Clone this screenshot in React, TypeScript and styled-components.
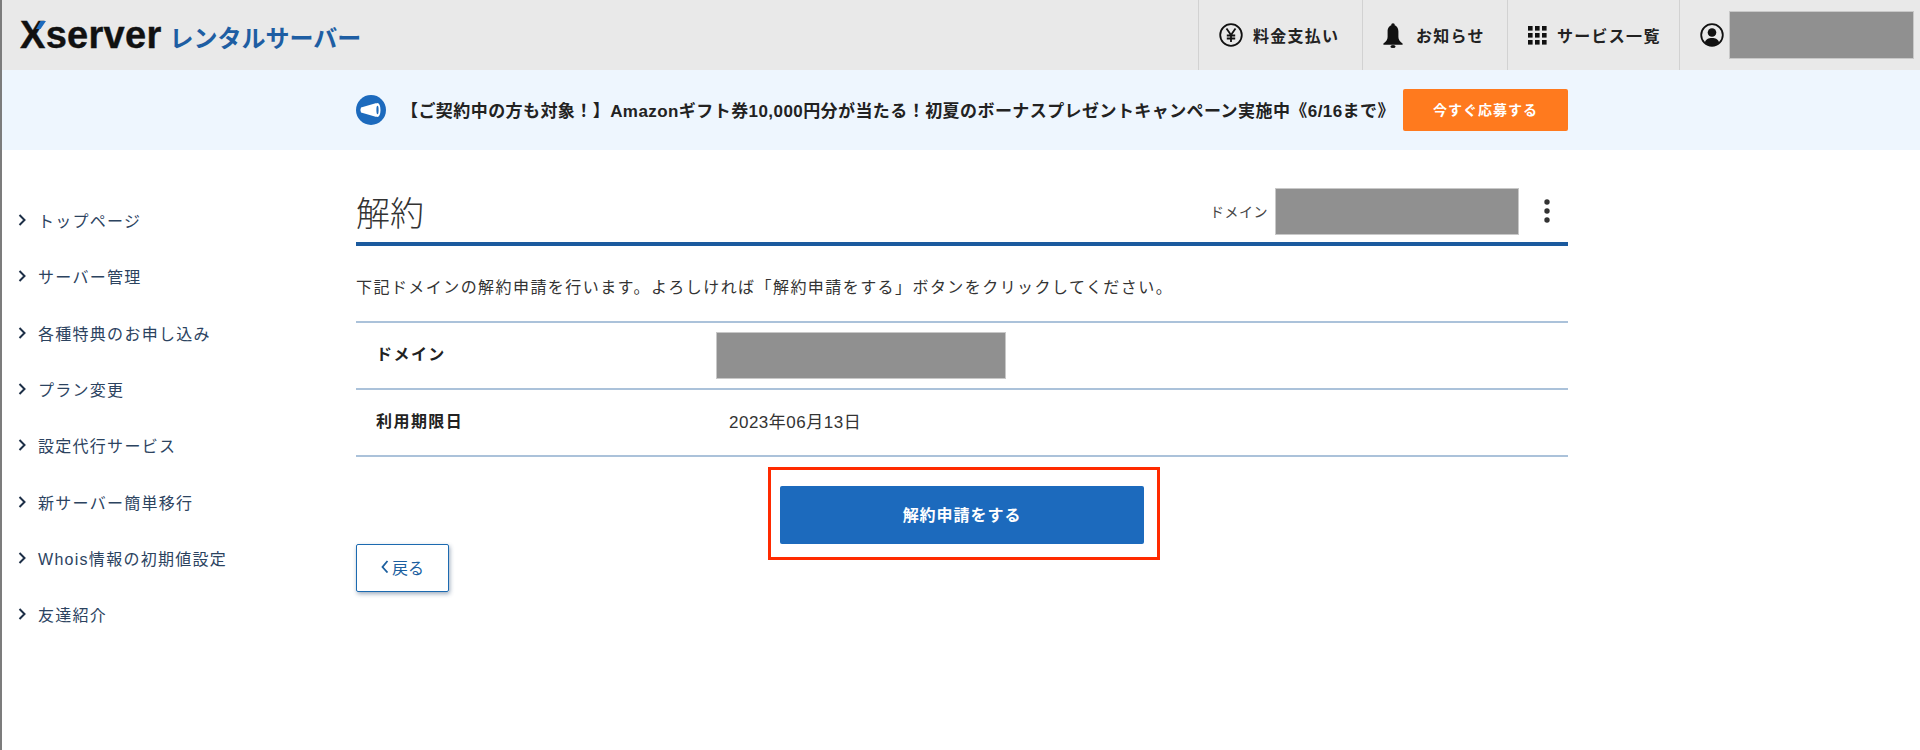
import styled, {createGlobalStyle} from 'styled-components';

const FONT = '"Liberation Sans", "Noto Sans CJK JP", sans-serif';

const NAV_ITEMS = [
  'トップページ',
  'サーバー管理',
  '各種特典のお申し込み',
  'プラン変更',
  '設定代行サービス',
  '新サーバー簡単移行',
  'Whois情報の初期値設定',
  '友達紹介',
];

const GlobalStyle = createGlobalStyle`
  html, body {
    margin: 0;
    padding: 0;
    background: #fff;
  }
  body {
    font-family: ${FONT};
    color: #333;
  }
`;

const Page = styled.div`
  box-sizing: border-box;
  min-height: 750px;
  border-left: 2px solid #7c7c7c;
`;

const Header = styled.header`
  display: flex;
  align-items: stretch;
  height: 70px;
  background: #e9e9e9;
`;

const Logo = styled.div`
  display: flex;
  align-items: center;
  flex: 1;
  padding-left: 18px;
`;

const LogoMark = styled.span`
  position: relative;
  font-size: 38px;
  font-weight: 700;
  letter-spacing: 0.3px;
  color: #111;
  -webkit-text-stroke: 0.4px #111;
`;

const LogoTick = styled.svg`
  position: absolute;
  left: 16px;
  top: 7px;
  width: 10px;
  height: 8px;
`;

const LogoSub = styled.span`
  margin-left: 8px;
  margin-top: 2px;
  font-size: 24px;
  font-weight: 700;
  color: #1e5ea3;
`;

const NavButton = styled.div<{$width: number}>`
  display: flex;
  align-items: center;
  gap: 10px;
  box-sizing: border-box;
  width: ${p => p.$width}px;
  padding-left: 20px;
  border-left: 1px solid #d2d2d2;
  font-size: 16px;
  font-weight: 700;
  letter-spacing: 0.08em;
  color: #222;
`;

const UserBox = styled(NavButton)`
  gap: 5px;
`;

const Redacted = styled.div<{$width: number; $height: number}>`
  flex: none;
  box-sizing: border-box;
  width: ${p => p.$width}px;
  height: ${p => p.$height}px;
  background: #909090;
  border: 1px solid #c8c8c8;
`;

const Banner = styled.div`
  display: flex;
  align-items: center;
  height: 80px;
  padding: 0 352px 0 354px;
  background: #eef6fe;
`;

const BannerText = styled.p`
  margin: 0 0 2px 15px;
  font-size: 17px;
  font-weight: 700;
  letter-spacing: 0.43px;
  color: #222;
  white-space: nowrap;
`;

const ApplyButton = styled.div`
  display: flex;
  align-items: center;
  justify-content: center;
  flex: none;
  width: 165px;
  height: 42px;
  box-sizing: border-box;
  padding-bottom: 2px;
  margin-left: auto;
  border-radius: 2px;
  background: #ff7a1e;
  color: #fff;
  font-size: 14px;
  font-weight: 700;
  letter-spacing: 0.07em;
`;

const Body = styled.div`
  display: flex;
  align-items: flex-start;
`;

const Sidebar = styled.nav`
  flex: none;
  width: 354px;
  padding-top: 42px;
`;

const SideItem = styled.div`
  display: flex;
  align-items: center;
  gap: 12px;
  height: 56.3px;
  padding-left: 16px;
  font-size: 16px;
  letter-spacing: 0.08em;
  color: #2c435f;
  white-space: nowrap;
`;

const Main = styled.main`
  flex: none;
  width: 1212px;
`;

const TitleRow = styled.div`
  display: flex;
  align-items: center;
  height: 96px;
  box-sizing: border-box;
  padding-top: 30px;
  border-bottom: 4px solid #1b5a9e;
`;

const Title = styled.h1`
  flex: 1;
  margin: 0;
  font-size: 34px;
  font-weight: 300;
  color: #333;
`;

const DomainLabel = styled.span`
  margin-right: 7px;
  font-size: 14px;
  letter-spacing: 0.5px;
  color: #444;
`;

const Dots = styled.svg`
  width: 8px;
  height: 26px;
  margin: 0 17px 0 24px;
`;

const Lead = styled.p`
  margin: 0;
  padding: 31px 0 22px;
  font-size: 16px;
  line-height: 22px;
  letter-spacing: 0.09em;
  color: #333;
`;

const InfoTable = styled.div`
  border-top: 2px solid #abc2da;
`;

const InfoRow = styled.div`
  display: flex;
  align-items: center;
  height: 65px;
  padding-left: 20px;
  border-bottom: 2px solid #abc2da;
`;

const InfoLabel = styled.div`
  width: 340px;
  padding-bottom: 6px;
  font-size: 16px;
  font-weight: 700;
  letter-spacing: 0.09em;
  color: #222;
`;

const InfoValue = styled.div`
  display: flex;
  padding: 0 0 5px 13px;
  font-size: 17px;
  letter-spacing: 0.5px;
  color: #333;
`;

const RedactedValue = styled(InfoValue)`
  padding: 0;
`;

const SubmitWrap = styled.div`
  display: flex;
  justify-content: center;
  padding-top: 29px;
`;

const SubmitButton = styled.div`
  position: relative;
  display: flex;
  align-items: center;
  justify-content: center;
  width: 364px;
  height: 58px;
  box-sizing: border-box;
  padding-bottom: 2px;
  border-radius: 2px;
  background: #1c6abd;
  color: #fff;
  font-size: 16px;
  font-weight: 700;
  letter-spacing: 0.06em;
`;

const Highlight = styled.div`
  position: absolute;
  top: -19px;
  right: -16px;
  bottom: -16px;
  left: -12px;
  border: 3px solid #ff2a00;
`;

const BackButton = styled.div`
  display: flex;
  align-items: center;
  justify-content: center;
  gap: 3px;
  box-sizing: border-box;
  width: 93px;
  height: 48px;
  padding-bottom: 3px;
  border: 1px solid #1c6ab0;
  border-radius: 2px;
  box-shadow: 1px 2px 4px rgba(40, 70, 110, 0.45);
  color: #1c5f9f;
  font-size: 16px;
`;

const BellSvg = styled.svg`
  margin-right: 3px;
`;

const YenIcon = () => (
  <svg width="24" height="24" viewBox="0 0 24 24" fill="none" stroke="#111" strokeWidth="1.8">
    <circle cx="12" cy="12" r="10.8" />
    <path d="M7.5 5.5 12 12l4.5-6.5M12 12v7M7.8 12.5h8.4M7.8 15.5h8.4" />
  </svg>
);

const BellIcon = () => (
  <BellSvg width="20" height="25" viewBox="0 0 20 25" fill="#111">
    <circle cx="10" cy="2" r="1.8" />
    <path d="M10 2c-3.6 0-5.4 3-5.4 6.5v5.5c0 2.5-1.4 4.5-4.2 6.4v1.3h19.2v-1.3c-2.8-1.9-4.2-3.9-4.2-6.4V8.5C15.4 5 13.6 2 10 2z" />
    <ellipse cx="10" cy="23.4" rx="2.6" ry="1.5" />
  </BellSvg>
);

const GridIcon = () => (
  <svg width="19" height="19" viewBox="0 0 19 19" fill="#111">
    {[0, 7, 14].map(y =>
      [0, 7, 14].map(x => <rect key={`${x}-${y}`} x={x} y={y} width="4.6" height="4.6" />),
    )}
  </svg>
);

const UserIcon = () => (
  <svg width="24" height="24" viewBox="0 0 24 24" fill="none">
    <circle cx="12" cy="12" r="10.8" stroke="#111" strokeWidth="1.8" />
    <circle cx="12" cy="9.5" r="4.3" fill="#111" />
    <path d="M4.8 19.5c.8-3.200 3.800-4.600 7.200-4.600s6.400 1.400 7.200 4.600A10 10 0 0 1 12 22.400a10 10 0 0 1-7.200-2.900z" fill="#111" />
  </svg>
);

const MegaphoneIcon = () => (
  <svg width="30" height="30" viewBox="0 0 30 30">
    <circle cx="15" cy="15" r="15" fill="#1c6abd" />
    <path d="M5 12.500Q3.800 15 5 17.500L20.500 22V8z" fill="#fff" />
    <ellipse cx="21.500" cy="15" rx="3" ry="7" fill="#fff" />
    <ellipse cx="21.500" cy="15" rx="1.100" ry="4.200" fill="#1c6abd" />
  </svg>
);

const ChevronRight = () => (
  <svg width="8" height="12" viewBox="0 0 8 12" fill="none" stroke="#1d2f47" strokeWidth="2">
    <path d="M1.500 1 6.500 6l-5 5" />
  </svg>
);

const ChevronLeft = () => (
  <svg width="8" height="13" viewBox="0 0 8 13" fill="none" stroke="#1c5f9f" strokeWidth="1.800">
    <path d="M6.500 1 1.500 7l5 5.500" />
  </svg>
);

const App = () => (
  <Page>
    <GlobalStyle />
    <Header>
      <Logo>
        <LogoMark>
          Xserver
          <LogoTick viewBox="0 0 10 8">
            <path d="M0 8h4.500L10 0H4.500z" fill="#1c6abd" />
          </LogoTick>
        </LogoMark>
        <LogoSub>レンタルサーバー</LogoSub>
      </Logo>
      <NavButton $width={164}>
        <YenIcon />
        料金支払い
      </NavButton>
      <NavButton $width={145}>
        <BellIcon />
        お知らせ
      </NavButton>
      <NavButton $width={172}>
        <GridIcon />
        サービス一覧
      </NavButton>
      <UserBox $width={241}>
        <UserIcon />
        <Redacted $width={185} $height={48} />
      </UserBox>
    </Header>
    <Banner>
      <MegaphoneIcon />
      <BannerText>
        【ご契約中の方も対象！】Amazonギフト券10,000円分が当たる！初夏のボーナスプレゼントキャンペーン実施中《6/16まで》
      </BannerText>
      <ApplyButton>今すぐ応募する</ApplyButton>
    </Banner>
    <Body>
      <Sidebar>
        {NAV_ITEMS.map(item => (
          <SideItem key={item}>
            <ChevronRight />
            {item}
          </SideItem>
        ))}
      </Sidebar>
      <Main>
        <TitleRow>
          <Title>解約</Title>
          <DomainLabel>ドメイン</DomainLabel>
          <Redacted $width={244} $height={47} />
          <Dots viewBox="0 0 8 26">
            <circle cx="4" cy="4" r="2.7" fill="#333" />
            <circle cx="4" cy="13" r="2.7" fill="#333" />
            <circle cx="4" cy="22" r="2.7" fill="#333" />
          </Dots>
        </TitleRow>
        <Lead>下記ドメインの解約申請を行います。よろしければ「解約申請をする」ボタンをクリックしてください。</Lead>
        <InfoTable>
          <InfoRow>
            <InfoLabel>ドメイン</InfoLabel>
            <RedactedValue>
              <Redacted $width={290} $height={47} />
            </RedactedValue>
          </InfoRow>
          <InfoRow>
            <InfoLabel>利用期限日</InfoLabel>
            <InfoValue>2023年06月13日</InfoValue>
          </InfoRow>
        </InfoTable>
        <SubmitWrap>
          <SubmitButton>
            解約申請をする
            <Highlight />
          </SubmitButton>
        </SubmitWrap>
        <BackButton>
          <ChevronLeft />
          戻る
        </BackButton>
      </Main>
    </Body>
  </Page>
);

export default App;
